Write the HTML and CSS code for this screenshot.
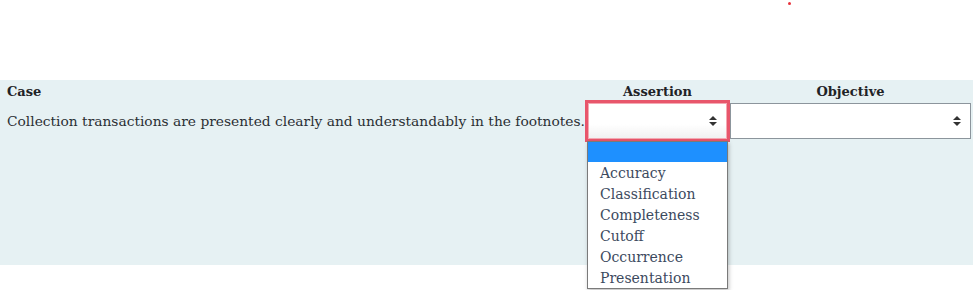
FILE: index.html
```html
<!DOCTYPE html>
<html lang="en">
<head>
  <meta charset="UTF-8">
  <title>Case Assertions</title>
  <link rel="stylesheet" href="styles.css">
</head>
<body>

<span class="dot"></span>

<div class="panel">
  <table class="cases">
    <thead>
      <tr>
        <th class="col-case">Case</th>
        <th class="col-assertion">Assertion</th>
        <th class="col-objective">Objective</th>
      </tr>
    </thead>
    <tbody>
      <tr>
        <td class="case-text">Collection transactions are presented clearly and understandably in the footnotes.</td>
        <td class="select-cell">
          <div class="select-wrap">
            <div class="select focused"><span class="arrows"></span></div>
            <ul class="dropdown">
              <li class="selected">&nbsp;</li>
              <li>Accuracy</li>
              <li>Classification</li>
              <li>Completeness</li>
              <li>Cutoff</li>
              <li>Occurrence</li>
              <li>Presentation</li>
            </ul>
          </div>
        </td>
        <td class="select-cell">
          <div class="select"><span class="arrows"></span></div>
        </td>
      </tr>
    </tbody>
  </table>
</div>

</body>
</html>
```

FILE: styles.css
```css
html, body {
  min-height: 290px;
}

body {
  margin: 0;
  font-family: "DejaVu Serif", serif;
  font-size: 14px;
  color: #2b2f33;
  background: #fff;
}

.dot {
  position: absolute;
  left: 788px;
  top: 2px;
  width: 3px;
  height: 3px;
  background: #e8323c;
  border-radius: 50%;
}

.panel {
  margin-top: 80px;
  height: 185px;
  background-color: #e6f1f3;
  padding-right: 2px;
}

.cases {
  width: 100%;
  border-collapse: collapse;
}

.cases th {
  font-weight: bold;
  font-size: 13px;
  height: 21px;
  padding: 1px 0 0;
  vertical-align: middle;
  color: #1f2326;
}

.col-case {
  text-align: left;
  padding-left: 7px !important;
}

.col-assertion {
  width: 145px;
  text-align: center;
}

.col-objective {
  width: 241px;
  text-align: center;
}

.cases td {
  padding: 0;
  height: 40px;
  vertical-align: top;
}

.case-text {
  padding: 11px 0 0 7px !important;
  font-size: 13.8px;
  white-space: nowrap;
}

.cases td.select-cell {
  padding-top: 1px;
}

.select-wrap {
  position: relative;
}

.select {
  height: 34px;
  background: #fff;
  border: 1px solid #8c959c;
  position: relative;
}

.select.focused {
  border-color: #f4a9b3;
  background: linear-gradient(#fff 60%, #f1f1f1);
  box-shadow: 0 0 0 3px #e8566b;
  margin: 0 3px;
}

.arrows {
  position: absolute;
  right: 13px;
  top: 12px;
  width: 0;
  height: 0;
}

.arrows::before,
.arrows::after {
  content: "";
  position: absolute;
  left: -4px;
  border-left: 4px solid transparent;
  border-right: 4px solid transparent;
}

.arrows::before {
  top: 0;
  border-bottom: 4px solid #333;
}

.arrows::after {
  top: 6px;
  border-top: 4px solid #333;
}

.dropdown {
  position: absolute;
  left: 2px;
  top: 38px;
  width: 139px;
  margin: 0;
  padding: 0;
  list-style: none;
  background: #fff;
  border: 1px solid #7a7a7a;
  box-shadow: 1px 2px 4px rgba(0, 0, 0, 0.25);
  z-index: 2;
}

.dropdown li {
  height: 21px;
  line-height: 23px;
  padding-left: 12px;
  color: #3c4a5e;
}

.dropdown li.selected {
  height: 20px;
  background: #1e90ff;
}
```
